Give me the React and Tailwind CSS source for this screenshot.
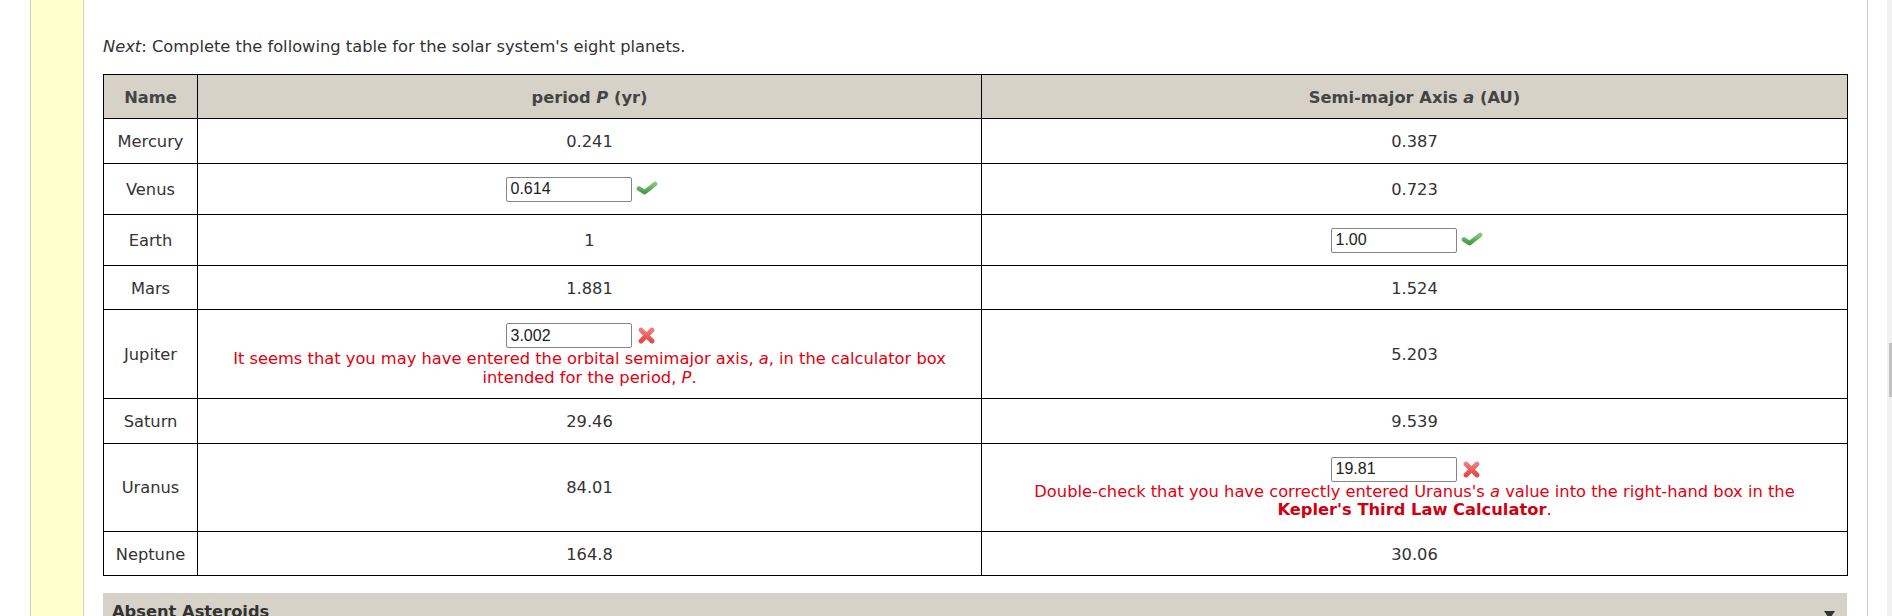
import React from 'react';

const Check = () => (
  <svg width="22" height="14" viewBox="0 0 22 14" className="mt-[4px] shrink-0">
    <defs>
      <linearGradient id="chk" x1="0" y1="0" x2="0" y2="1">
        <stop offset="0" stopColor="#7fc97f" />
        <stop offset="1" stopColor="#479a47" />
      </linearGradient>
    </defs>
    <path d="M3 7.5 L8.5 11.2 L19 3" stroke="url(#chk)" strokeWidth="4.6" fill="none" strokeLinejoin="round" strokeLinecap="round" />
  </svg>
);

const Cross = () => (
  <svg width="22" height="18" viewBox="0 0 22 18" className="mt-[4px] shrink-0">
    <defs>
      <linearGradient id="crs" x1="0" y1="0" x2="0" y2="1">
        <stop offset="0" stopColor="#f57a7a" />
        <stop offset="1" stopColor="#e84848" />
      </linearGradient>
    </defs>
    <path d="M5 3 L16 14 M16 3 L5 14" stroke="url(#crs)" strokeWidth="4.8" fill="none" strokeLinecap="round" />
  </svg>
);

const Answer = ({ value, ok }) => (
  <div className="flex justify-center items-start h-[26px] gap-[4px]">
    <input
      defaultValue={value}
      readOnly
      className="w-[126px] h-[25px] border border-[#858585] rounded-[2px] bg-white pl-[4px] text-[16px] leading-[23px] text-[#222] font-['Liberation_Sans',Arial,sans-serif] outline-none"
    />
    {ok ? <Check /> : <Cross />}
    <span className="w-[12px] shrink-0"></span>
  </div>
);

const cell = 'border border-black px-2 pt-[13px] pb-[11px] text-center align-middle';

const rows = [
  { name: 'Mercury', p: '0.241', a: '0.387' },
  { name: 'Venus', p: <Answer value="0.614" ok />, a: '0.723' },
  { name: 'Earth', p: '1', a: <Answer value="1.00" ok /> },
  { name: 'Mars', p: '1.881', a: '1.524' },
  {
    name: 'Jupiter',
    p: (
      <div>
        <Answer value="3.002" />
        <p className="text-[#e4000f] leading-[19px]">
          It seems that you may have entered the orbital semimajor axis, <i>a</i>, in the calculator box
          <br />
          intended for the period, <i>P</i>.
        </p>
      </div>
    ),
    a: '5.203',
  },
  { name: 'Saturn', p: '29.46', a: '9.539' },
  {
    name: 'Uranus',
    p: '84.01',
    a: (
      <div>
        <Answer value="19.81" />
        <p className="text-[#e4000f] leading-[18.5px]">
          Double-check that you have correctly entered Uranus's <i>a</i> value into the right-hand box in the
          <br />
          <b className="text-[#d00010]">Kepler's Third Law Calculator</b>.
        </p>
      </div>
    ),
  },
  { name: 'Neptune', p: '164.8', a: '30.06' },
];

export default function App() {
  return (
    <div className="flex h-[616px] overflow-hidden bg-white font-['DejaVu_Sans',Verdana,sans-serif] text-[16.3px] leading-[19.5px] text-[#333]">
      <div className="w-[30px] shrink-0"></div>
      <div className="w-[54px] shrink-0 bg-[#ffffcc] border-x border-[#cfcfcf]"></div>

      {/* main content */}
      <div className="w-[1784px] shrink-0 border-r border-[#cccccc] pl-[19px] pr-[20px] pt-[37px]">
        <p>
          <i>Next</i>: Complete the following table for the solar system's eight planets.
        </p>

        <table className="mt-[17px] w-[1744px] table-fixed border-collapse">
          <colgroup>
            <col className="w-[94px]" />
            <col className="w-[784px]" />
            <col className="w-[866px]" />
          </colgroup>
          <thead>
            <tr className="bg-[#d6d2c7] text-[#444] font-bold">
              <th className={cell}>Name</th>
              <th className={cell}>
                period <i>P</i> (yr)
              </th>
              <th className={cell}>
                Semi-major Axis <i>a</i> (AU)
              </th>
            </tr>
          </thead>
          <tbody>
            {rows.map((r) => (
              <tr key={r.name}>
                <td className={cell}>{r.name}</td>
                <td className={cell}>{r.p}</td>
                <td className={cell}>{r.a}</td>
              </tr>
            ))}
          </tbody>
        </table>

        {/* collapsed section */}
        <div className="mt-[17px] flex items-start justify-between bg-[#d6d2c7] pl-[9px] pr-[12px] py-[9px] font-bold text-[#333]">
          <span>Absent Asteroids</span>
          <svg width="11" height="8" viewBox="0 0 11 8" className="mt-[9px]">
            <path d="M0 0 H11 L5.5 8 Z" fill="#333" />
          </svg>
        </div>
      </div>

      <div className="w-[19px] shrink-0"></div>
      {/* scrollbar */}
      <div className="w-[5px] shrink-0 bg-[#f1f1f1] flex flex-col">
        <div className="h-[343px]"></div>
        <div className="h-[54px] ml-[2px] bg-[#c1c1c1]"></div>
      </div>
    </div>
  );
}
